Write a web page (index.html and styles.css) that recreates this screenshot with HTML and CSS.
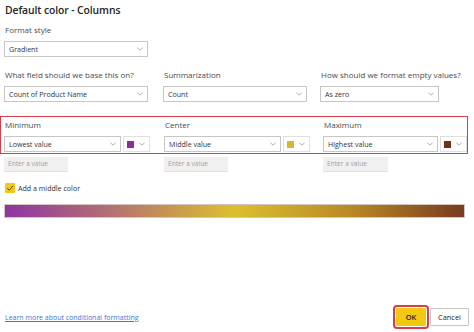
FILE: index.html
```html
<!DOCTYPE html>
<html>
<head>
<meta charset="utf-8">
<link rel="stylesheet" href="styles.css">
</head>
<body>
<div class="dialog">
  <div class="title">Default color - Columns</div>

  <div class="row row-top">
    <div class="field">
      <div class="label">Format style</div>
      <div class="select w144"><span>Gradient</span><svg class="chev" viewBox="0 0 8 5"><path d="M0.5 0.8 L4 4 L7.5 0.8"/></svg></div>
    </div>
  </div>

  <div class="row row-2">
    <div class="field">
      <div class="label">What field should we base this on?</div>
      <div class="select"><span>Count of Product Name</span><svg class="chev" viewBox="0 0 8 5"><path d="M0.5 0.8 L4 4 L7.5 0.8"/></svg></div>
    </div>
    <div class="field">
      <div class="label">Summarization</div>
      <div class="select"><span>Count</span><svg class="chev" viewBox="0 0 8 5"><path d="M0.5 0.8 L4 4 L7.5 0.8"/></svg></div>
    </div>
    <div class="field">
      <div class="label">How should we format empty values?</div>
      <div class="select"><span>As zero</span><svg class="chev" viewBox="0 0 8 5"><path d="M0.5 0.8 L4 4 L7.5 0.8"/></svg></div>
    </div>
  </div>

  <div class="highlight">
    <div class="group">
      <div class="label">Minimum</div>
      <div class="pick">
        <div class="select grow"><span>Lowest value</span><svg class="chev" viewBox="0 0 8 5"><path d="M0.5 0.8 L4 4 L7.5 0.8"/></svg></div>
        <div class="swatch-btn"><i class="sw sw-purple"></i><svg class="chev" viewBox="0 0 8 5"><path d="M0.5 0.8 L4 4 L7.5 0.8"/></svg></div>
      </div>
    </div>
    <div class="group">
      <div class="label">Center</div>
      <div class="pick">
        <div class="select grow"><span>Middle value</span><svg class="chev" viewBox="0 0 8 5"><path d="M0.5 0.8 L4 4 L7.5 0.8"/></svg></div>
        <div class="swatch-btn"><i class="sw sw-yellow"></i><svg class="chev" viewBox="0 0 8 5"><path d="M0.5 0.8 L4 4 L7.5 0.8"/></svg></div>
      </div>
    </div>
    <div class="group">
      <div class="label">Maximum</div>
      <div class="pick">
        <div class="select grow"><span>Highest value</span><svg class="chev" viewBox="0 0 8 5"><path d="M0.5 0.8 L4 4 L7.5 0.8"/></svg></div>
        <div class="swatch-btn"><i class="sw sw-brown"></i><svg class="chev" viewBox="0 0 8 5"><path d="M0.5 0.8 L4 4 L7.5 0.8"/></svg></div>
      </div>
    </div>
  </div>

  <div class="values">
    <div class="input">Enter a value</div>
    <div class="input">Enter a value</div>
    <div class="input">Enter a value</div>
  </div>

  <div class="check-row">
    <span class="checkbox"><svg viewBox="0 0 10 10"><path d="M2.2 5.2 L4.2 7.2 L8 2.8"/></svg></span>
    <span class="check-label">Add a middle color</span>
  </div>

  <div class="gradient"></div>

  <div class="spacer"></div>

  <div class="footer">
    <a class="link" href="#">Learn more about conditional formatting</a>
    <div class="buttons">
      <button class="btn btn-ok">OK</button>
      <button class="btn btn-cancel">Cancel</button>
    </div>
  </div>
</div>
</body>
</html>
```
FILE: styles.css
```css
* { box-sizing: border-box; }
html, body { margin: 0; padding: 0; background: #fff; }
body {
  width: 474px;
  height: 332px;
  overflow: hidden;
  font-family: "Open Sans", "Noto Sans", sans-serif;
  color: #333;
}
.dialog {
  height: 332px;
  display: flex;
  flex-direction: column;
}
.title {
  font-size: 10.4px;
  font-weight: 600;
  line-height: 16px;
  padding: 2px 0 0 5px;
  height: 20px;
  color: #252423;
  letter-spacing: -0.1px;
}
.label {
  font-size: 8px;
  line-height: 12px;
  color: #4a4a4a;
  padding-left: 1px;
  white-space: nowrap;
}
.row { display: grid; padding-left: 4px; }
.row-top { margin-top: 4px; grid-template-columns: 144px; }
.row-2 { margin-top: 12px; grid-template-columns: 144px 144px 117px; column-gap: 15px; }
.row-2 .field:nth-child(3) { margin-left: -2px; }
.field { display: flex; flex-direction: column; gap: 5px; }
.select {
  height: 16px;
  border: 1px solid #c8c6c4;
  background: #fff;
  display: flex;
  align-items: center;
  justify-content: space-between;
  padding: 0 4px 0 4px;
  font-size: 7.1px;
  color: #333;
  white-space: nowrap;
}
.chev { width: 6px; height: 4px; fill: none; stroke: #888; stroke-width: 0.9; flex: none; }
.highlight {
  margin-top: 14px;
  height: 38px;
  width: 468px;
  border: 1px solid #d83b4a;
  display: grid;
  grid-template-columns: 146px 146px 143px;
  column-gap: 14px;
  padding: 2px 0 0 3px;
  overflow: hidden;
}
.highlight .group:nth-child(3) { margin-left: -1px; }
.group { display: flex; flex-direction: column; gap: 5px; }
.pick { display: flex; gap: 2px; }
.grow { flex: 1; }
.swatch-btn {
  width: 27px;
  height: 16px;
  flex: none;
  border: 1px solid #e1dfdd;
  display: flex;
  align-items: center;
  justify-content: space-between;
  padding: 0 4px 0 3px;
}
.sw { display: block; width: 7px; height: 7px; }
.sw-purple { background: #8a2f97; }
.sw-yellow { background: #d9b92b; }
.sw-brown { background: #6b3319; }
.values {
  margin-top: 3px;
  display: grid;
  grid-template-columns: 64px 64px 64px;
  column-gap: 96px;
  padding-left: 4px;
}
.values .input:nth-child(3) { margin-left: -1px; }
.input {
  height: 15px;
  background: #f0f0f0;
  border-bottom: 1px solid #e1dfdd;
  font-size: 6.6px;
  color: #a19f9d;
  line-height: 14px;
  padding-left: 4px;
  white-space: nowrap;
}
.check-row {
  margin-top: 11px;
  display: flex;
  align-items: center;
  gap: 3px;
  padding-left: 5px;
  height: 10px;
}
.checkbox {
  width: 10px;
  height: 10px;
  background: #f2c811;
  border-radius: 1px;
  display: block;
}
.checkbox svg { width: 10px; height: 10px; display: block; fill: none; stroke: #5a4a0a; stroke-width: 1; }
.check-label { font-size: 7.1px; color: #333; line-height: 10px; }
.gradient {
  margin: 11px 0 0 4px;
  width: 461px;
  height: 14px;
  border: 1px solid #d0c8c0;
  background: linear-gradient(to right, #8f35a3 0%, #b8766d 25%, #dcbf2e 50%, #b98a26 75%, #7a3a1f 100%);
}
.spacer { flex: 1; }
.footer {
  display: flex;
  align-items: center;
  justify-content: space-between;
  padding: 0 5px 6px 5px;
}
.link {
  font-size: 7px;
  color: #3a78d4;
  text-decoration: underline;
  margin-top: 1px;
}
.buttons { display: flex; gap: 4px; align-items: center; margin-right: 0; }
.btn {
  font-family: "Open Sans", "Noto Sans", sans-serif;
  font-size: 7.4px;
  height: 18px;
  padding: 0;
  border-radius: 1px;
  color: #252423;
  cursor: pointer;
}
.btn-ok {
  width: 30px;
  background: #f2c811;
  border: none;
  outline: 2px solid #d83b4a;
  outline-offset: 1px;
  font-weight: 600;
}
.btn-cancel {
  width: 39px;
  background: #fff;
  border: 1px solid #c8c6c4;
}
```
